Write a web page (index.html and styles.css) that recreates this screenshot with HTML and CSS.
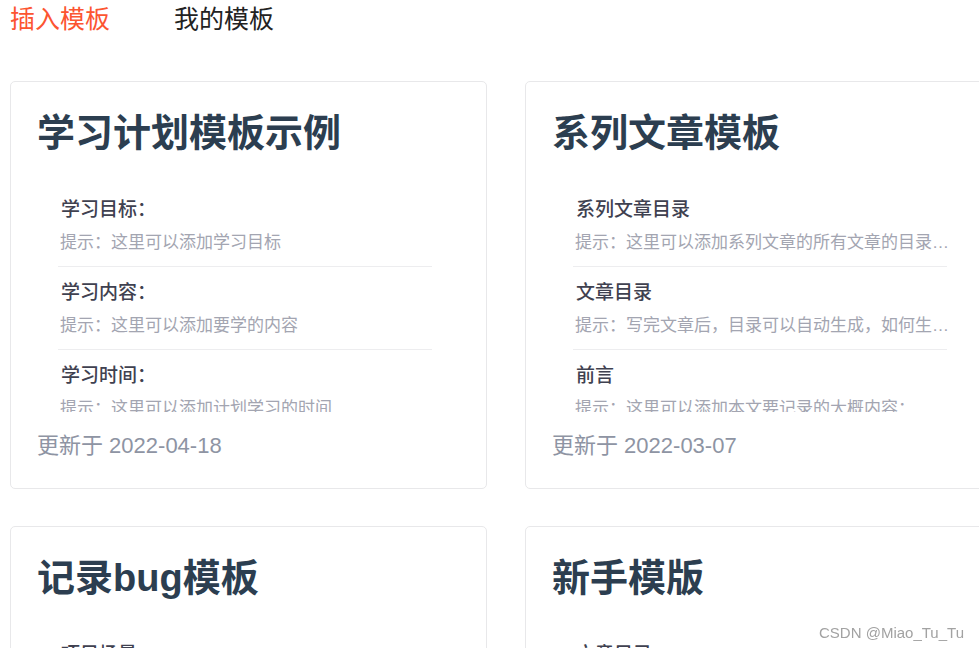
FILE: index.html
```html
<!DOCTYPE html>
<html lang="zh-CN">
<head>
  <meta charset="UTF-8" />
  <title>模板</title>
  <link rel="stylesheet" href="styles.css">
</head>
<body>
  <div class="page">
    <div class="tabs">
      <span class="tab active">插入模板</span>
      <span class="tab">我的模板</span>
    </div>
    <div class="grid">
      <div class="card">
        <h2>学习计划模板示例</h2>
        <div class="list">
          <div class="item">
            <div class="label">学习目标：</div>
            <div class="hint">提示：这里可以添加学习目标</div>
          </div>
          <div class="item">
            <div class="label">学习内容：</div>
            <div class="hint">提示：这里可以添加要学的内容</div>
          </div>
          <div class="item">
            <div class="label">学习时间：</div>
            <div class="hint">提示：这里可以添加计划学习的时间</div>
          </div>
        </div>
        <div class="date">更新于 2022-04-18</div>
      </div>
      <div class="card">
        <h2>系列文章模板</h2>
        <div class="list">
          <div class="item">
            <div class="label">系列文章目录</div>
            <div class="hint">提示：这里可以添加系列文章的所有文章的目录，目录需要自己手动添加</div>
          </div>
          <div class="item">
            <div class="label">文章目录</div>
            <div class="hint">提示：写完文章后，目录可以自动生成，如何生成可参考右边的帮助文档</div>
          </div>
          <div class="item">
            <div class="label">前言</div>
            <div class="hint">提示：这里可以添加本文要记录的大概内容：</div>
          </div>
        </div>
        <div class="date">更新于 2022-03-07</div>
      </div>
      <div class="card">
        <h2>记录bug模板</h2>
        <div class="list">
          <div class="item">
            <div class="label">项目场景：</div>
            <div class="hint">提示：这里简述项目相关背景：</div>
          </div>
          <div class="item">
            <div class="label">问题描述</div>
            <div class="hint">提示：这里描述项目中遇到的问题：</div>
          </div>
        </div>
        <div class="date">更新于 2022-03-07</div>
      </div>
      <div class="card">
        <h2>新手模版</h2>
        <div class="list">
          <div class="item">
            <div class="label">文章目录</div>
            <div class="hint">提示：写完文章后，目录可以自动生成</div>
          </div>
          <div class="item">
            <div class="label">前言</div>
            <div class="hint">提示：这里可以添加本文要记录的大概内容：</div>
          </div>
        </div>
        <div class="date">更新于 2022-03-07</div>
      </div>
    </div>
  </div>
  <div class="watermark">CSDN @Miao_Tu_Tu</div>
</body>
</html>
```

FILE: styles.css
```css
* { box-sizing: border-box; }
body {
  margin: 0;
  background: #fff;
  font-family: "Liberation Sans", "Noto Sans CJK SC", sans-serif;
  overflow: hidden;
}
.page {
  padding: 4px 10px;
}
.tabs {
  display: flex;
  gap: 64px;
  height: 30px;
}
.tab {
  font-size: 25px;
  line-height: 30px;
  color: #222;
}
.tab.active { color: #fc5531; }
.grid {
  margin-top: 47px;
  display: grid;
  grid-template-columns: 477px 477px;
  column-gap: 38px;
  row-gap: 37px;
}
.card {
  height: 408px;
  border: 1px solid #e8e8ea;
  border-radius: 5px;
  padding: 28px 26px 27px;
  display: flex;
  flex-direction: column;
}
.card h2 {
  margin: 0;
  font-size: 38px;
  line-height: 46px;
  font-weight: bold;
  color: #2c3e50;
}
.list {
  margin: 28px 0 0 21px;
  width: 386px;
  padding-right: 12px;
  height: 228px;
  overflow: hidden;
}
.item {
  padding: 12px 0 11px;
  border-bottom: 1px solid #ededef;
}
.label {
  padding-left: 3px;
  font-size: 19px;
  line-height: 28px;
  font-weight: 500;
  color: #3f4150;
}
.hint {
  margin: 7px -12px 0 2px;
  font-size: 17px;
  line-height: 24px;
  color: #a3a5b1;
  white-space: nowrap;
  overflow: hidden;
  text-overflow: ellipsis;
}
.date {
  margin-top: 19px;
  font-size: 22px;
  line-height: 30px;
  color: #8e94a3;
}
.watermark {
  position: fixed;
  right: 15px;
  bottom: 7px;
  font-size: 15px;
  color: #a2a2a2;
}
```
